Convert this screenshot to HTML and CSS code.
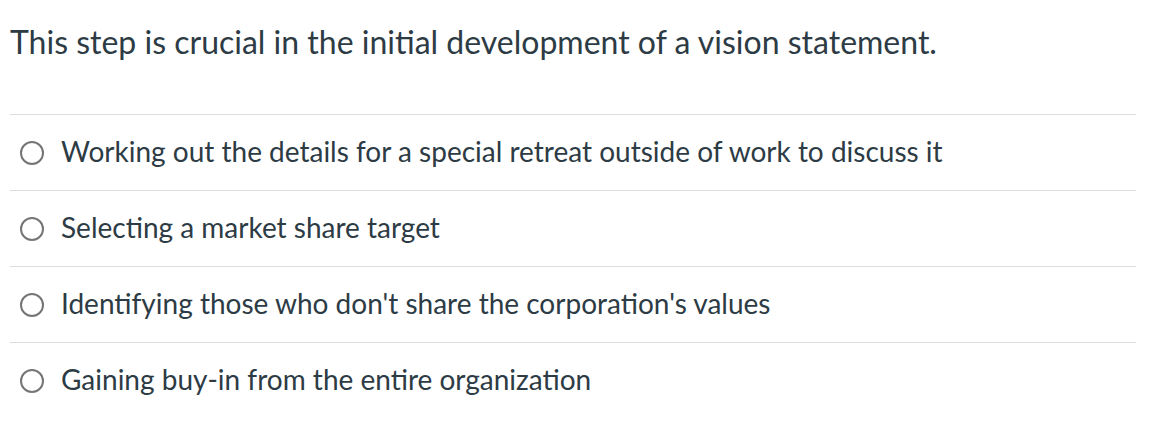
FILE: index.html
```html
<!DOCTYPE html>
<html lang="en">
<head>
<meta charset="utf-8">
<title>Quiz question</title>
<link rel="stylesheet" href="styles.css">
</head>
<body>
<div class="question">
  <div class="question-text">This step is crucial in the initial development of a vision statement.</div>
  <div class="answers">
    <label class="answer"><span class="radio"></span><span class="answer-text">Working out the details for a special retreat outside of work to discuss it</span></label>
    <label class="answer"><span class="radio"></span><span class="answer-text">Selecting a market share target</span></label>
    <label class="answer"><span class="radio"></span><span class="answer-text">Identifying those who don't share the corporation's values</span></label>
    <label class="answer"><span class="radio"></span><span class="answer-text">Gaining buy-in from the entire organization</span></label>
  </div>
</div>
</body>
</html>
```
FILE: styles.css
```css
html, body {
  margin: 0;
  padding: 0;
  background: #ffffff;
}
body {
  font-family: Lato, "Open Sans", sans-serif;
  color: #2d3b45;
}
.question {
  padding: 20px 24px 0 10px;
}
.question-text {
  font-size: 32px;
  line-height: 44px;
}
.answers {
  margin-top: 50px;
}
.answer {
  display: flex;
  align-items: center;
  gap: 17px;
  border-top: 1px solid #dddddd;
  padding-left: 10px;
  box-sizing: border-box;
  height: 76px;
}
.radio {
  width: 24px;
  height: 24px;
  box-sizing: border-box;
  border: 2px solid #757575;
  border-radius: 50%;
  flex: none;
}
.answer-text {
  font-size: 28px;
  line-height: 34px;
  margin-bottom: 4px;
}
```
